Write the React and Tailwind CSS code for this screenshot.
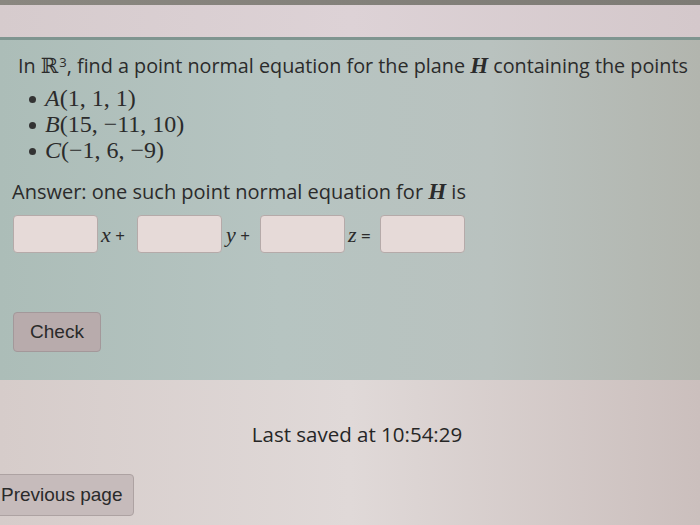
export default function App() {
  const sans = { fontFamily: '"Open Sans", "Liberation Sans", sans-serif' };
  const serif = { fontFamily: '"Liberation Serif", "DejaVu Serif", serif' };
  const arial = { fontFamily: '"Liberation Sans", Arial, sans-serif' };
  const Box = () => (
    <div className="h-[38px] w-[85px] rounded-[4px] border border-[#b5aaa9] bg-[#e6dad8]" />
  );
  return (
    <div className="relative h-[525px] w-[700px] overflow-hidden bg-[#ddd5d4]" style={sans}>
      <div className="h-[5px] bg-[linear-gradient(90deg,#8a8780,#7d7b75)]" />
      <div className="h-[32px] bg-[linear-gradient(90deg,#d6cbcd,#ddd2d6_50%,#d4c8cb)]" />
      <div className="h-[343px] border-t-[3px] border-[#7f9590] bg-[linear-gradient(90deg,#acbdb8,#b6c4c1_40%,#b9c2bf_70%,#b2b5ae)]">
        <div className="whitespace-nowrap pl-[18px] pt-[13px] text-[19.8px] leading-[26px] text-[#2b2b2b]">
          In <span style={serif} className="text-[21px]">ℝ</span>
          <sup className="ml-[1px] text-[13px]">3</sup>, find a point normal equation for the plane{' '}
          <span style={serif} className="text-[23px] font-bold italic">H</span> containing the points
        </div>
        <ul className="mt-[6px] pl-[29px] text-[24px] leading-[26px] text-[#2b2b2b]" style={serif}>
          {[
            ['A', '(1, 1, 1)'],
            ['B', '(15, −11, 10)'],
            ['C', '(−1, 6, −9)'],
          ].map(([l, r]) => (
            <li key={l} className="flex items-center">
              <span className="mr-[9px] mt-[2px] inline-block h-[7px] w-[7px] rounded-full bg-[#333]" />
              <span className="italic">{l}</span>
              <span>{r}</span>
            </li>
          ))}
        </ul>
        <div className="pl-[12px] pt-[16px] text-[20px] leading-[26px] text-[#2b2b2b]">
          Answer: one such point normal equation for{' '}
          <span style={serif} className="text-[23px] font-bold italic">H</span> is
        </div>
        <div className="mt-[10px] flex items-center pl-[13px] text-[#2b2b2b]">
          <Box />
          <span className="ml-[3px] w-[36px] text-[17px]">
            <span style={serif} className="text-[22px] italic">x</span> +
          </span>
          <Box />
          <span className="ml-[4px] w-[34px] text-[17px]">
            <span style={serif} className="text-[22px] italic">y</span> +
          </span>
          <Box />
          <span className="ml-[3px] w-[32px] text-[17px]">
            <span style={serif} className="text-[22px] italic">z</span> =
          </span>
          <Box />
        </div>
        <div className="pl-[13px] pt-[59px]">
          <div
            className="flex h-[40px] w-[88px] items-center justify-center rounded-[4px] border border-[#a3989a] bg-[#b8abac] text-[19px] text-[#2a2a2a]"
            style={arial}
          >
            Check
          </div>
        </div>
      </div>
      <div className="h-[145px] bg-[linear-gradient(90deg,#d6ccca,#e0d9d8_50%,#cbbfbd)]">
        <div className="pt-[41px] text-center text-[20.5px] leading-[26px] text-[#262626]">
          <span className="ml-[14px]">Last saved at 10:54:29</span>
        </div>
        <div className="mt-[27px]">
          <div
            className="-ml-[4px] flex h-[42px] w-[138px] items-center rounded-[4px] border border-[#ada2a2] bg-[#c6bbbb] pl-[4px] text-[19px] text-[#2a2a2a]"
            style={arial}
          >
            Previous page
          </div>
        </div>
      </div>
    </div>
  );
}
